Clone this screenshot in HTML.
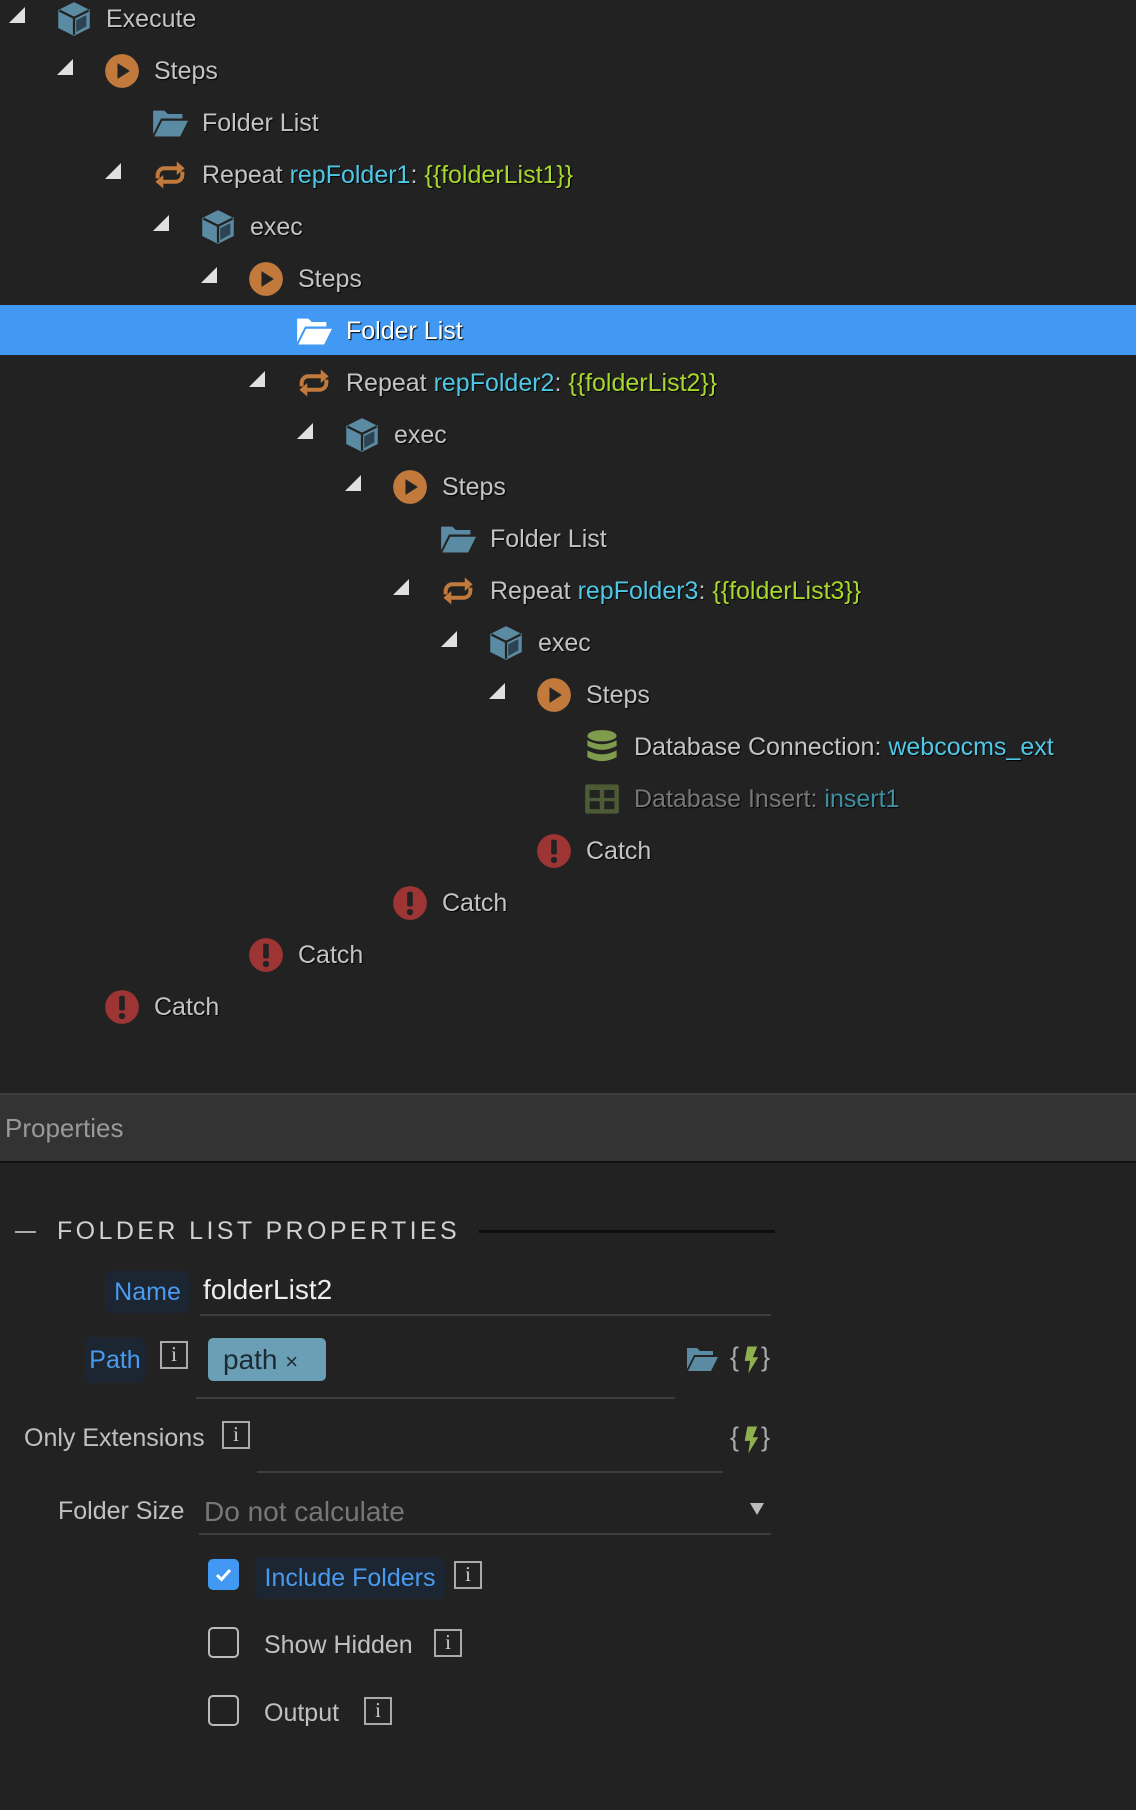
<!DOCTYPE html>
<html><head><meta charset="utf-8"><style>
*{margin:0;padding:0;box-sizing:border-box}
body{width:1136px;height:1810px;background:#222;font-family:"Liberation Sans",sans-serif;position:relative;overflow:hidden;color:#c8c8c8}
.row{position:absolute;left:0;width:1136px;height:52px}
.row.sel{background:#4199f4}
.tri{position:absolute;top:14px;width:0;height:0;border-left:16px solid transparent;border-bottom:16px solid #e0e0e0}
.ic{position:absolute;top:8px;width:36px;height:36px}
.tx{position:absolute;top:12px;font-size:25px;line-height:28px;white-space:nowrap;color:#c4c4c4;text-shadow:1px 1px 1px #000}
.sel .tx{color:#fff}
.v{color:#4fc8e6}.b{color:#a8d82a}
.dim{color:#777}.dv{color:#3f8fa0}
.abs{position:absolute}
.info{position:absolute;width:28px;height:28px;border:2px solid #aaa;color:#ccc;font-family:"Liberation Serif",serif;font-size:21px;line-height:23px;text-align:center}
.ul{position:absolute;height:2px;background:#3d3d3d}
.lbl{position:absolute;font-size:25px;color:#c0c0c0;white-space:nowrap}
.blbox{position:absolute;background:#1c2632;border-radius:5px;color:#4a9af0;font-size:25px;text-align:center}
.cb{position:absolute;width:31px;height:31px;border:2px solid #bbb;border-radius:5px}
.bolt{position:absolute;font-size:27px;color:#aaa}
</style></head><body>
<svg width="0" height="0" style="position:absolute">
<defs>
<symbol id="cube" viewBox="0 0 32 32"><polygon points="16,1 30,8 30,24 16,31 2,24 2,8" fill="#5b8ba3"/><polygon points="18,17 27,12.5 27,22.5 18,27.5" fill="#2c4452"/><path d="M3 8.5 L16 15 L29 8.5 M16 15 V30" stroke="#222" stroke-width="2" fill="none"/></symbol>
<symbol id="play" viewBox="0 0 32 32"><circle cx="16" cy="16" r="15" fill="#c27a3c"/><polygon points="12,9 23,16 12,23" fill="#222"/></symbol>
<symbol id="fold" viewBox="0 0 32 32"><path d="M1 5 H11 L14 8 H27 V12 H8 L1 26 Z" fill="#5b8ba3"/><path d="M9 14 H32 L25 28 H2 Z" fill="#5b8ba3"/></symbol>
<symbol id="foldw" viewBox="0 0 32 32"><path d="M1 5 H11 L14 8 H27 V12 H8 L1 26 Z" fill="#fff"/><path d="M9 14 H32 L25 28 H2 Z" fill="#fff"/></symbol>
<symbol id="rep" viewBox="0 0 32 32"><path d="M5 19 V16 a6 6 0 0 1 6-6 H24" stroke="#c27a3c" stroke-width="3.5" fill="none"/><polygon points="22,4 29,10 22,16" fill="#c27a3c"/><path d="M27 13 V16 a6 6 0 0 1 -6 6 H8" stroke="#c27a3c" stroke-width="3.5" fill="none"/><polygon points="10,16 3,22 10,28" fill="#c27a3c"/></symbol>
<symbol id="db" viewBox="0 0 32 32"><ellipse cx="16" cy="6" rx="13" ry="5" fill="#7f9c4c"/><path d="M3 10 Q16 17 29 10 V15 Q16 22 3 15Z" fill="#7f9c4c"/><path d="M3 19 Q16 26 29 19 V25 Q16 32 3 25Z" fill="#7f9c4c"/></symbol>
<symbol id="tbl" viewBox="0 0 32 32"><rect x="1" y="3" width="30" height="26" rx="2" fill="#4d5a36"/><rect x="5" y="8" width="9" height="7" fill="#222"/><rect x="18" y="8" width="9" height="7" fill="#222"/><rect x="5" y="18" width="9" height="7" fill="#222"/><rect x="18" y="18" width="9" height="7" fill="#222"/></symbol>
<symbol id="catch" viewBox="0 0 32 32"><circle cx="16" cy="16" r="15" fill="#9e3535"/><rect x="13.5" y="6" width="5" height="13" rx="1.5" fill="#222"/><circle cx="16" cy="24" r="2.8" fill="#222"/></symbol>
<symbol id="bolt" viewBox="0 0 20 32"><polygon points="6,1 17,1 12,13 18,13 7,31 9,17 3,17" fill="#8fb04f"/></symbol>
</defs></svg>

<div class="row" style="top:-7px"><div class="tri" style="left:9px"></div><svg class="ic" style="left:56px"><use href="#cube"/></svg><div class="tx" style="left:106px">Execute</div></div>
<div class="row" style="top:45px"><div class="tri" style="left:57px"></div><svg class="ic" style="left:104px"><use href="#play"/></svg><div class="tx" style="left:154px">Steps</div></div>
<div class="row" style="top:97px"><svg class="ic" style="left:152px"><use href="#fold"/></svg><div class="tx" style="left:202px">Folder List</div></div>
<div class="row" style="top:149px"><div class="tri" style="left:105px"></div><svg class="ic" style="left:152px"><use href="#rep"/></svg><div class="tx" style="left:202px">Repeat <span class="v">repFolder1</span>: <span class="b">{{folderList1}}</span></div></div>
<div class="row" style="top:201px"><div class="tri" style="left:153px"></div><svg class="ic" style="left:200px"><use href="#cube"/></svg><div class="tx" style="left:250px">exec</div></div>
<div class="row" style="top:253px"><div class="tri" style="left:201px"></div><svg class="ic" style="left:248px"><use href="#play"/></svg><div class="tx" style="left:298px">Steps</div></div>
<div class="row sel" style="top:305px;height:50px"><svg class="ic" style="left:296px"><use href="#foldw"/></svg><div class="tx" style="left:346px">Folder List</div></div>
<div class="row" style="top:357px"><div class="tri" style="left:249px"></div><svg class="ic" style="left:296px"><use href="#rep"/></svg><div class="tx" style="left:346px">Repeat <span class="v">repFolder2</span>: <span class="b">{{folderList2}}</span></div></div>
<div class="row" style="top:409px"><div class="tri" style="left:297px"></div><svg class="ic" style="left:344px"><use href="#cube"/></svg><div class="tx" style="left:394px">exec</div></div>
<div class="row" style="top:461px"><div class="tri" style="left:345px"></div><svg class="ic" style="left:392px"><use href="#play"/></svg><div class="tx" style="left:442px">Steps</div></div>
<div class="row" style="top:513px"><svg class="ic" style="left:440px"><use href="#fold"/></svg><div class="tx" style="left:490px">Folder List</div></div>
<div class="row" style="top:565px"><div class="tri" style="left:393px"></div><svg class="ic" style="left:440px"><use href="#rep"/></svg><div class="tx" style="left:490px">Repeat <span class="v">repFolder3</span>: <span class="b">{{folderList3}}</span></div></div>
<div class="row" style="top:617px"><div class="tri" style="left:441px"></div><svg class="ic" style="left:488px"><use href="#cube"/></svg><div class="tx" style="left:538px">exec</div></div>
<div class="row" style="top:669px"><div class="tri" style="left:489px"></div><svg class="ic" style="left:536px"><use href="#play"/></svg><div class="tx" style="left:586px">Steps</div></div>
<div class="row" style="top:721px"><svg class="ic" style="left:584px"><use href="#db"/></svg><div class="tx" style="left:634px">Database Connection: <span class="v">webcocms_ext</span></div></div>
<div class="row" style="top:773px"><svg class="ic" style="left:584px"><use href="#tbl"/></svg><div class="tx dim" style="left:634px">Database Insert: <span class="dv">insert1</span></div></div>
<div class="row" style="top:825px"><svg class="ic" style="left:536px"><use href="#catch"/></svg><div class="tx" style="left:586px">Catch</div></div>
<div class="row" style="top:877px"><svg class="ic" style="left:392px"><use href="#catch"/></svg><div class="tx" style="left:442px">Catch</div></div>
<div class="row" style="top:929px"><svg class="ic" style="left:248px"><use href="#catch"/></svg><div class="tx" style="left:298px">Catch</div></div>
<div class="row" style="top:981px"><svg class="ic" style="left:104px"><use href="#catch"/></svg><div class="tx" style="left:154px">Catch</div></div>

<div class="abs" style="top:1093px;left:0;width:1136px;height:70px;background:#333;border-top:2px solid #3e3e3e;border-bottom:2px solid #111"></div>
<div class="abs" style="top:1113px;left:5px;font-size:26px;color:#999">Properties</div>

<div class="abs" style="top:1231px;left:15px;width:21px;height:2px;background:#aaa"></div>
<div class="abs" style="top:1217px;left:57px;font-size:25px;letter-spacing:3.4px;color:#d0d0d0;white-space:nowrap">FOLDER LIST PROPERTIES</div>
<div class="abs" style="top:1230px;left:479px;width:296px;height:3px;background:#0e0e0e"></div>

<div class="blbox" style="left:105px;top:1271px;width:85px;height:42px;line-height:42px">Name</div>
<div class="abs" style="left:203px;top:1274px;font-size:28px;color:#eee">folderList2</div>
<div class="ul" style="left:200px;top:1314px;width:571px"></div>

<div class="blbox" style="left:85px;top:1337px;width:60px;height:46px;line-height:46px">Path</div>
<div class="info" style="left:160px;top:1341px">i</div>
<div class="abs" style="left:208px;top:1338px;width:118px;height:43px;background:#6a9fb5;border-radius:5px;color:#1c2a33;font-size:28px;line-height:43px;padding-left:15px;white-space:nowrap">path <span style="font-size:22px">×</span></div>
<svg class="abs" style="left:685px;top:1343px" width="34" height="32"><use href="#fold"/></svg>
<div class="bolt" style="left:730px;top:1342px">{</div><svg class="abs" style="left:742px;top:1343px" width="18" height="34" viewBox="0 0 20 32"><use href="#bolt"/></svg><div class="bolt" style="left:761px;top:1342px">}</div>
<div class="ul" style="left:196px;top:1397px;width:479px"></div>

<div class="lbl" style="left:24px;top:1424px">Only Extensions</div>
<div class="info" style="left:222px;top:1421px">i</div>
<div class="bolt" style="left:730px;top:1422px">{</div><svg class="abs" style="left:742px;top:1423px" width="18" height="34" viewBox="0 0 20 32"><use href="#bolt"/></svg><div class="bolt" style="left:761px;top:1422px">}</div>
<div class="ul" style="left:257px;top:1471px;width:466px"></div>

<div class="lbl" style="left:58px;top:1497px">Folder Size</div>
<div class="abs" style="left:204px;top:1496px;font-size:28px;color:#777">Do not calculate</div>
<div class="abs" style="left:750px;top:1503px;width:0;height:0;border-left:7px solid transparent;border-right:7px solid transparent;border-top:12px solid #bbb"></div>
<div class="ul" style="left:199px;top:1533px;width:572px"></div>

<div class="cb" style="left:208px;top:1559px;background:#4199f4;border-color:#4199f4"><svg width="27" height="27" viewBox="0 0 27 27"><path d="M7 14 L11.5 18.5 L20 9" stroke="#fff" stroke-width="3" fill="none"/></svg></div>
<div class="blbox" style="left:255px;top:1557px;width:190px;height:42px;line-height:42px">Include Folders</div>
<div class="info" style="left:454px;top:1561px">i</div>

<div class="cb" style="left:208px;top:1627px"></div>
<div class="lbl" style="left:264px;top:1631px">Show Hidden</div>
<div class="info" style="left:434px;top:1629px">i</div>

<div class="cb" style="left:208px;top:1695px"></div>
<div class="lbl" style="left:264px;top:1699px">Output</div>
<div class="info" style="left:364px;top:1697px">i</div>
</body></html>
